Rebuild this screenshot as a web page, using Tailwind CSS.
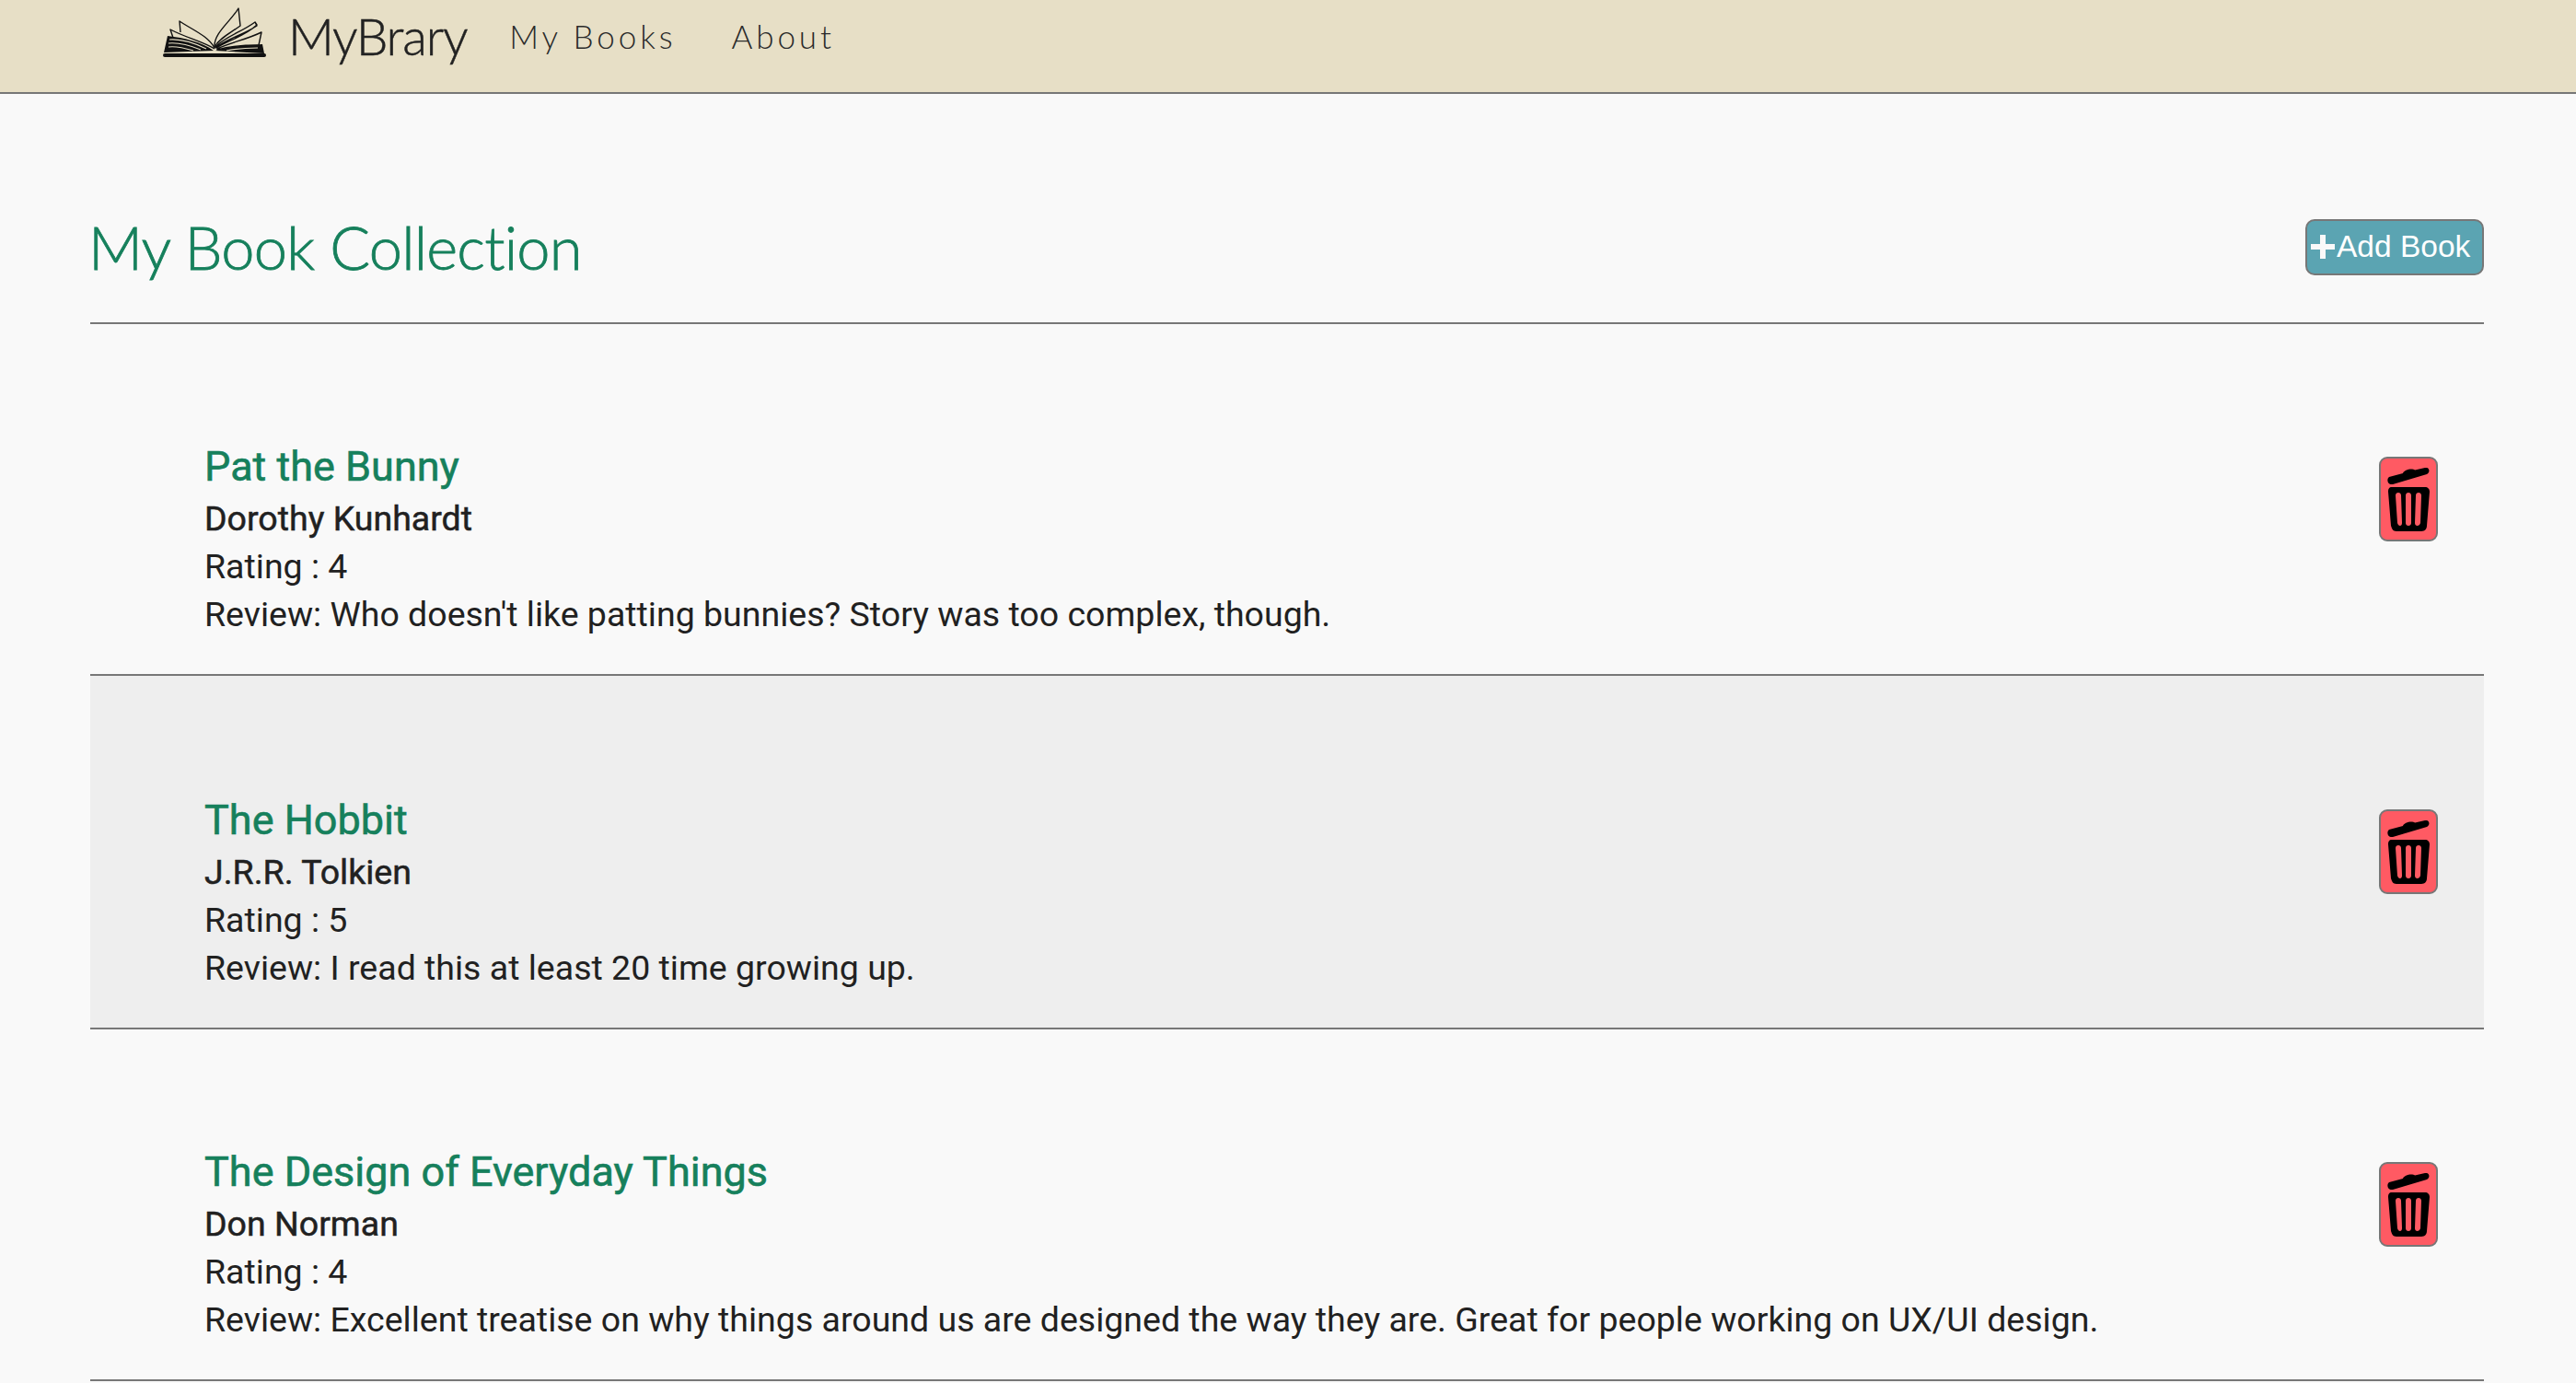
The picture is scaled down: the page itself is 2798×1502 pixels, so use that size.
<!DOCTYPE html>
<html><head><meta charset="utf-8"><script src="https://cdn.jsdelivr.net/npm/@tailwindcss/browser@4"></script></head>
<body class="bg-[#f9f9f9] font-['Roboto',sans-serif] text-[#212121] h-[1502px] overflow-hidden">
<header class="h-[102px] bg-[#e7dfc6] border-b-2 border-[#777] flex items-start pl-[176px]">
  <svg class="mt-[8px] w-[116px] h-[56px]" viewBox="1.500 0 113 56" fill="none" stroke="#111" stroke-width="1.4" stroke-linejoin="round">
    <path d="M57 44C50 31 34 25 19 15L20 27M57 45C44 37 26 33 9 24L12 33" fill="#e7dfc6"/>
    <path d="M57 43C56 28 74 16 83 1L85 20C74 28 63 33 57 43Z" fill="#e7dfc6"/>
    <path d="M58 43C68 32 86 27 101 16L103 20C88 30 70 34 58 44ZM59 44C72 36 92 30 103 19L101 16M60 45C74 38 92 35 108 27L105 41C90 41 74 42 60 46Z" fill="#e7dfc6"/>
    <path d="M6 31C24 33 44 38 56 47L2 49ZM109 40C92 41 74 42 58 47L111 50Z" fill="#111" stroke="none"/>
    <path d="M8 35C22 34 38 40 48 45M7 39C18 38 32 42 42 46M7 43C14 42 24 44 34 47M104 44C92 44 80 45 70 47" stroke="#e7dfc6" stroke-width="1.1"/>
    <path d="M3 52H111" stroke-width="4" stroke-linecap="round"/>
  </svg>
  <span class="ml-[21px] mt-[3px] text-[55px] leading-[72px] tracking-[-1.2px] font-['Lato',sans-serif] font-light [-webkit-text-stroke:0.5px] text-[#222]">MyBrary</span>
  <nav class="ml-[46px] mt-[16px] flex gap-[60px] text-[35px] leading-[46px] tracking-[3.9px] font-['Lato',sans-serif] font-light text-[#2a2a2a]"><a>My Books</a><a>About</a></nav>
</header>
<main class="ml-[98px] mr-[100px]">
  <div class="h-[250px] border-b-2 border-[#777] flex items-center justify-between pt-[84px]">
    <h1 class="-ml-[2px] text-[65px] leading-[80px] font-['Lato',sans-serif] font-light [-webkit-text-stroke:0.8px] text-[#16805c] tracking-[-0.8px]">My Book Collection</h1>
    <button class="h-[61px] w-[194px] border-2 border-[#777] rounded-[10px] bg-[#5ba4b2] text-white text-[33.5px] font-['Liberation_Sans',sans-serif] flex items-center whitespace-nowrap pl-[3px]"><svg class="w-[28px] h-[28px] mr-[1px]" viewBox="0 0 28 28" fill="#f9f9f9"><path d="M11 1h6v10h10v6H17v10h-6V17H1v-6h10z"/></svg>Add Book</button>
  </div>
  <section class="h-[382px] border-b-2 border-[#777] flex items-center justify-between pl-[124px] pr-[50px]">
    <div class="pt-[86px]"><h2 class="text-[45px] leading-[60px] [-webkit-text-stroke:0.6px] text-[#16805c]">Pat the Bunny</h2><p class="text-[37.5px] leading-[52px] [-webkit-text-stroke:0.5px]">Dorothy Kunhardt</p><p class="text-[37.5px] leading-[52px]">Rating : 4</p><p class="text-[37.5px] leading-[52px]">Review: Who doesn't like patting bunnies? Story was too complex, though.</p></div>
    <button class="w-[64px] h-[92px] border-2 border-[#777] rounded-[9px] bg-[#ff5a63] flex items-center justify-center"><svg class="w-[46px] h-[69px]" viewBox="0 0 46 69" fill="#000"><path d="M2 10L17 6C18 2 27 0 30 2.500L41 0C46 -1 47 5 43 7L6 18C0 19 -1 12 2 10Z"/><path fill-rule="evenodd" d="M5 21H41C44 21 46 23 46 26L43 63C43 66 41 69 37 69H10C6 69 5 66 4 63L1 26C1 23 2 21 5 21ZM9 30L11 60C12 64 16 64 16 60L15 30C15 26 9 26 9 30ZM20 30V60C20 64 26 64 26 60V30C26 26 20 26 20 30ZM31 30L30 60C30 64 35 64 36 60L37 30C37 26 31 26 31 30Z"/></svg></button>
  </section>
  <section class="h-[384px] bg-[#eee] border-b-2 border-[#777] flex items-center justify-between pl-[124px] pr-[50px]">
    <div class="pt-[88px]"><h2 class="text-[45px] leading-[60px] [-webkit-text-stroke:0.6px] text-[#16805c]">The Hobbit</h2><p class="text-[37.5px] leading-[52px] [-webkit-text-stroke:0.5px]">J.R.R. Tolkien</p><p class="text-[37.5px] leading-[52px]">Rating : 5</p><p class="text-[37.5px] leading-[52px]">Review: I read this at least 20 time growing up.</p></div>
    <button class="w-[64px] h-[92px] border-2 border-[#777] rounded-[9px] bg-[#ff5a63] flex items-center justify-center"><svg class="w-[46px] h-[69px]" viewBox="0 0 46 69" fill="#000"><path d="M2 10L17 6C18 2 27 0 30 2.500L41 0C46 -1 47 5 43 7L6 18C0 19 -1 12 2 10Z"/><path fill-rule="evenodd" d="M5 21H41C44 21 46 23 46 26L43 63C43 66 41 69 37 69H10C6 69 5 66 4 63L1 26C1 23 2 21 5 21ZM9 30L11 60C12 64 16 64 16 60L15 30C15 26 9 26 9 30ZM20 30V60C20 64 26 64 26 60V30C26 26 20 26 20 30ZM31 30L30 60C30 64 35 64 36 60L37 30C37 26 31 26 31 30Z"/></svg></button>
  </section>
  <section class="h-[382px] border-b-2 border-[#777] flex items-center justify-between pl-[124px] pr-[50px]">
    <div class="pt-[86px]"><h2 class="text-[45px] leading-[60px] [-webkit-text-stroke:0.6px] text-[#16805c]">The Design of Everyday Things</h2><p class="text-[37.5px] leading-[52px] [-webkit-text-stroke:0.5px]">Don Norman</p><p class="text-[37.5px] leading-[52px]">Rating : 4</p><p class="text-[37.5px] leading-[52px]">Review: Excellent treatise on why things around us are designed the way they are. Great for people working on UX/UI design.</p></div>
    <button class="w-[64px] h-[92px] border-2 border-[#777] rounded-[9px] bg-[#ff5a63] flex items-center justify-center"><svg class="w-[46px] h-[69px]" viewBox="0 0 46 69" fill="#000"><path d="M2 10L17 6C18 2 27 0 30 2.500L41 0C46 -1 47 5 43 7L6 18C0 19 -1 12 2 10Z"/><path fill-rule="evenodd" d="M5 21H41C44 21 46 23 46 26L43 63C43 66 41 69 37 69H10C6 69 5 66 4 63L1 26C1 23 2 21 5 21ZM9 30L11 60C12 64 16 64 16 60L15 30C15 26 9 26 9 30ZM20 30V60C20 64 26 64 26 60V30C26 26 20 26 20 30ZM31 30L30 60C30 64 35 64 36 60L37 30C37 26 31 26 31 30Z"/></svg></button>
  </section>
</main>
</body></html>
